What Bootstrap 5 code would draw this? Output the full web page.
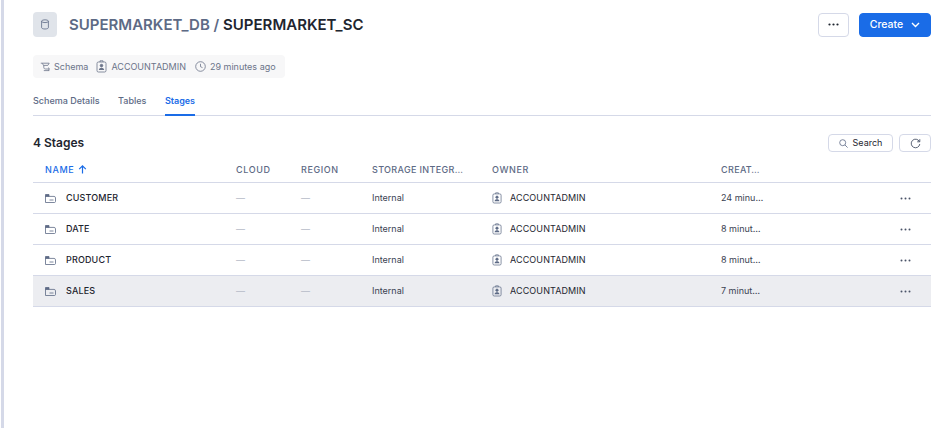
<!DOCTYPE html>
<html lang="en">
<head>
<meta charset="utf-8">
<title>Stages</title>
<link rel="stylesheet" href="https://cdn.jsdelivr.net/npm/bootstrap@5.3.0/dist/css/bootstrap.min.css">
<style>
html,body{height:100%;}
body{font-family:Inter,"Liberation Sans",sans-serif;background:#fff;color:#1e252f;overflow:hidden;}
.shell{height:428px;margin-left:1px;border-left:3px solid #d5d9e8;padding:12px 17px 0 29px;}
.db-tile{width:24px;height:25px;background:#e0e4ea;border-radius:4px;color:#5d6a85;}
.page-title{font-size:15px;font-weight:600;line-height:25px;margin:0 0 0 12px;}
.page-title span{color:#5d6a85;}
.head-actions{gap:10px;}
.tool-btn{height:24px;border:1px solid #d5d9e8;border-radius:4px;background:#fff;color:#1e252f;padding:0;}
.more-btn{width:31px;}
.create-btn{width:72px;background:#1a6ce7;border-color:#1a6ce7;color:#fff;font-size:10.5px;font-weight:500;gap:8px;}
.meta-pill{width:252px;height:23px;background:#f7f7f8;border-radius:4px;margin-top:18px;padding:0 7px;font-size:9px;color:#6b7489;}
.meta-pill svg{stroke:#6b7489;}
.meta-lead{margin-right:3px;}
.meta-clock{margin-left:9px;margin-right:4px;}
.tab-row{margin-top:15px;border-bottom:1px solid #d5d9e8;height:23px;gap:18.5px;}
.tab-item{font-size:9px;font-weight:500;color:#5d6a85;line-height:15px;height:23px;}
.tab-item.is-on{color:#1a6ce7;font-weight:600;border-bottom:2px solid #1a6ce7;}
.count-row{margin-top:18px;height:18px;}
.count-title{font-size:12px;font-weight:600;margin:0;}
.count-actions{gap:6px;}
.small-btn{height:18px;border:1px solid #d5d9e8;border-radius:4px;background:#fff;color:#1e252f;font-size:9px;padding:0;}
.search-btn{width:65px;gap:5px;}
.refresh-btn{width:32px;}
.stage-table{table-layout:fixed;width:898px;margin:6px 0 0;font-size:9px;--bs-table-bg:transparent;}
.stage-table th{height:24px;padding:0 12px;font-size:9px;font-weight:500;letter-spacing:.6px;color:#5d6a85;border-bottom:1px solid #d5d9e8;vertical-align:middle;white-space:nowrap;overflow:visible;}
.stage-table th.tight-head{letter-spacing:.35px;}
.stage-table td{height:31px;padding:1px 12px 0;vertical-align:middle;border-bottom:1px solid #d5d9e8;color:#3a4252;white-space:nowrap;}
.stage-table th.sort-on{color:#1a6ce7;}
.stage-table td.dash{color:#b5bac8;}
.stage-table td.ink{color:#1e252f;}
.stage-name{font-weight:500;letter-spacing:.15px;gap:10px;}
.owner-cell{gap:8px;letter-spacing:.1px;}
.stage-table .row-on td{background:#ecedf1;}
.stage-table td.row-more{padding-right:20px;}
svg{display:block;flex:none;}
</style>
</head>
<body>
<main class="shell">
  <header class="d-flex align-items-center">
    <div class="db-tile d-flex align-items-center justify-content-center">
      <svg width="10" height="11" viewBox="0 0 10 11" fill="none" stroke="currentColor" stroke-width=".8"><ellipse cx="5" cy="2.2" rx="3.4" ry="1.4"/><path d="M1.6 2.2v6.4c0 .8 1.500 1.400 3.400 1.400s3.400-.6 3.400-1.400V2.200"/></svg>
    </div>
    <h1 class="page-title"><span>SUPERMARKET_DB /</span> SUPERMARKET_SC</h1>
    <div class="ms-auto d-flex head-actions">
      <button type="button" class="tool-btn more-btn d-flex align-items-center justify-content-center" aria-label="More">
        <svg width="11" height="3" viewBox="0 0 11 3" fill="#1e252f"><circle cx="1.500" cy="1.500" r="1.100"/><circle cx="5.500" cy="1.500" r="1.100"/><circle cx="9.500" cy="1.500" r="1.100"/></svg>
      </button>
      <button type="button" class="tool-btn create-btn d-flex align-items-center justify-content-center">Create
        <svg width="9" height="6" viewBox="0 0 9 6" fill="none" stroke="#fff" stroke-width="1.400"><path d="M1 1l3.500 3.500L8 1"/></svg>
      </button>
    </div>
  </header>

  <div class="meta-pill d-flex align-items-center">
    <svg width="11" height="10" viewBox="0 0 11 10" fill="none" stroke-width=".8" class="meta-lead"><path d="M.8 1.200h8.400L7.800 3.400H3.600M2.400 1.400l1.400 2.400v1.800c0 1 .9 1.400 1.800 1.400h3.600M3.800 8.600h5.600"/><path d="M8 5.600l1.600 1.400L8 8.400"/></svg>
    <span>Schema</span>
    <svg width="11" height="13" viewBox="0 0 11 13" fill="none" stroke-width=".8" class="ms-2 me-1"><rect x="1" y="2" width="9" height="10" rx="1.400"/><path d="M4 2V.8h3V2"/><circle cx="5.500" cy="5.600" r="1.300" fill="#6b7489"/><path d="M2.800 10c.3-1.500 1.300-2.200 2.700-2.200s2.400.7 2.700 2.200z" fill="#6b7489" stroke="none"/></svg>
    <span>ACCOUNTADMIN</span>
    <svg width="11" height="11" viewBox="0 0 11 11" fill="none" stroke-width=".8" class="meta-clock"><circle cx="5.500" cy="5.500" r="4.800"/><path d="M5.500 2.800v2.900l2 .9"/></svg>
    <span>29 minutes ago</span>
  </div>

  <nav class="tab-row d-flex">
    <span class="tab-item">Schema Details</span>
    <span class="tab-item">Tables</span>
    <span class="tab-item is-on">Stages</span>
  </nav>

  <section>
    <div class="count-row d-flex align-items-center">
      <h2 class="count-title">4 Stages</h2>
      <div class="ms-auto d-flex count-actions">
        <button type="button" class="small-btn search-btn d-flex align-items-center justify-content-center">
          <svg width="9" height="9" viewBox="0 0 9 9" fill="none" stroke="#5d6a85" stroke-width=".8"><circle cx="3.700" cy="3.700" r="3"/><path d="M6 6l2.600 2.600"/></svg>Search
        </button>
        <button type="button" class="small-btn refresh-btn d-flex align-items-center justify-content-center" aria-label="Refresh">
          <svg width="11" height="11" viewBox="0 0 11 11" fill="none" stroke="#4a5468" stroke-width=".9"><path d="M9.400 3.600A4.300 4.300 0 1 0 9.800 6"/><path d="M9.800 1.200v2.600H7.200"/></svg>
        </button>
      </div>
    </div>

    <table class="stage-table">
      <colgroup>
        <col style="width:191px"><col style="width:65px"><col style="width:71px"><col style="width:120px"><col style="width:229px"><col style="width:64px"><col>
      </colgroup>
      <thead>
        <tr>
          <th class="sort-on"><span class="d-flex align-items-center gap-1">NAME
            <svg width="9" height="9" viewBox="0 0 9 9" fill="none" stroke="#1a6ce7" stroke-width="1.200"><path d="M4.500 8.500V1M1.200 4.200l3.300-3.300 3.300 3.300"/></svg></span></th>
          <th>CLOUD</th><th>REGION</th><th class="tight-head">STORAGE INTEGR…</th><th>OWNER</th><th class="tight-head">CREAT…</th><th></th>
        </tr>
      </thead>
      <tbody>
        <tr>
          <td class="ink"><span class="stage-name d-flex align-items-center"><svg width="11" height="9" viewBox="0 0 11 9" fill="none" stroke="#5d6a85" stroke-width=".8"><path d="M.5.5h3.500v2H.5z" fill="#5d6a85"/><path d="M.5 2v6.500h9c.6 0 1-.4 1-1V3.800c0-.8-.6-1.400-1.400-1.400H4"/><path d="M4.500 6h4"/></svg>CUSTOMER</span></td>
          <td class="dash">—</td><td class="dash">—</td><td>Internal</td>
          <td class="ink"><span class="owner-cell d-flex align-items-center"><svg width="10" height="12" viewBox="0 0 11 13" fill="none" stroke="#5d6a85" stroke-width=".8"><rect x="1" y="2" width="9" height="10" rx="1.400"/><path d="M4 2V.8h3V2"/><circle cx="5.500" cy="5.600" r="1.300" fill="#5d6a85"/><path d="M2.800 10c.3-1.500 1.300-2.200 2.700-2.200s2.400.7 2.700 2.200z" fill="#5d6a85" stroke="none"/></svg>ACCOUNTADMIN</span></td>
          <td>24 minu…</td>
          <td class="row-more"><svg class="ms-auto" width="11" height="3" viewBox="0 0 11 3" fill="#4a5468"><circle cx="1.500" cy="1.500" r="1"/><circle cx="5.500" cy="1.500" r="1"/><circle cx="9.500" cy="1.500" r="1"/></svg></td>
        </tr>
        <tr>
          <td class="ink"><span class="stage-name d-flex align-items-center"><svg width="11" height="9" viewBox="0 0 11 9" fill="none" stroke="#5d6a85" stroke-width=".8"><path d="M.5.5h3.500v2H.5z" fill="#5d6a85"/><path d="M.5 2v6.500h9c.6 0 1-.4 1-1V3.800c0-.8-.6-1.400-1.400-1.400H4"/><path d="M4.500 6h4"/></svg>DATE</span></td>
          <td class="dash">—</td><td class="dash">—</td><td>Internal</td>
          <td class="ink"><span class="owner-cell d-flex align-items-center"><svg width="10" height="12" viewBox="0 0 11 13" fill="none" stroke="#5d6a85" stroke-width=".8"><rect x="1" y="2" width="9" height="10" rx="1.400"/><path d="M4 2V.8h3V2"/><circle cx="5.500" cy="5.600" r="1.300" fill="#5d6a85"/><path d="M2.800 10c.3-1.500 1.300-2.200 2.700-2.200s2.400.7 2.700 2.200z" fill="#5d6a85" stroke="none"/></svg>ACCOUNTADMIN</span></td>
          <td>8 minut…</td>
          <td class="row-more"><svg class="ms-auto" width="11" height="3" viewBox="0 0 11 3" fill="#4a5468"><circle cx="1.500" cy="1.500" r="1"/><circle cx="5.500" cy="1.500" r="1"/><circle cx="9.500" cy="1.500" r="1"/></svg></td>
        </tr>
        <tr>
          <td class="ink"><span class="stage-name d-flex align-items-center"><svg width="11" height="9" viewBox="0 0 11 9" fill="none" stroke="#5d6a85" stroke-width=".8"><path d="M.5.5h3.500v2H.5z" fill="#5d6a85"/><path d="M.5 2v6.500h9c.6 0 1-.4 1-1V3.800c0-.8-.6-1.400-1.400-1.400H4"/><path d="M4.500 6h4"/></svg>PRODUCT</span></td>
          <td class="dash">—</td><td class="dash">—</td><td>Internal</td>
          <td class="ink"><span class="owner-cell d-flex align-items-center"><svg width="10" height="12" viewBox="0 0 11 13" fill="none" stroke="#5d6a85" stroke-width=".8"><rect x="1" y="2" width="9" height="10" rx="1.400"/><path d="M4 2V.8h3V2"/><circle cx="5.500" cy="5.600" r="1.300" fill="#5d6a85"/><path d="M2.800 10c.3-1.500 1.300-2.200 2.700-2.200s2.400.7 2.700 2.200z" fill="#5d6a85" stroke="none"/></svg>ACCOUNTADMIN</span></td>
          <td>8 minut…</td>
          <td class="row-more"><svg class="ms-auto" width="11" height="3" viewBox="0 0 11 3" fill="#4a5468"><circle cx="1.500" cy="1.500" r="1"/><circle cx="5.500" cy="1.500" r="1"/><circle cx="9.500" cy="1.500" r="1"/></svg></td>
        </tr>
        <tr class="row-on">
          <td class="ink"><span class="stage-name d-flex align-items-center"><svg width="11" height="9" viewBox="0 0 11 9" fill="none" stroke="#5d6a85" stroke-width=".8"><path d="M.5.5h3.500v2H.5z" fill="#5d6a85"/><path d="M.5 2v6.500h9c.6 0 1-.4 1-1V3.800c0-.8-.6-1.400-1.400-1.400H4"/><path d="M4.500 6h4"/></svg>SALES</span></td>
          <td class="dash">—</td><td class="dash">—</td><td>Internal</td>
          <td class="ink"><span class="owner-cell d-flex align-items-center"><svg width="10" height="12" viewBox="0 0 11 13" fill="none" stroke="#5d6a85" stroke-width=".8"><rect x="1" y="2" width="9" height="10" rx="1.400"/><path d="M4 2V.8h3V2"/><circle cx="5.500" cy="5.600" r="1.300" fill="#5d6a85"/><path d="M2.800 10c.3-1.500 1.300-2.200 2.700-2.200s2.400.7 2.700 2.200z" fill="#5d6a85" stroke="none"/></svg>ACCOUNTADMIN</span></td>
          <td>7 minut…</td>
          <td class="row-more"><svg class="ms-auto" width="11" height="3" viewBox="0 0 11 3" fill="#4a5468"><circle cx="1.500" cy="1.500" r="1"/><circle cx="5.500" cy="1.500" r="1"/><circle cx="9.500" cy="1.500" r="1"/></svg></td>
        </tr>
      </tbody>
    </table>
  </section>
</main>
<script src="https://cdn.jsdelivr.net/npm/bootstrap@5.3.0/dist/js/bootstrap.bundle.min.js"></script>
</body>
</html>
